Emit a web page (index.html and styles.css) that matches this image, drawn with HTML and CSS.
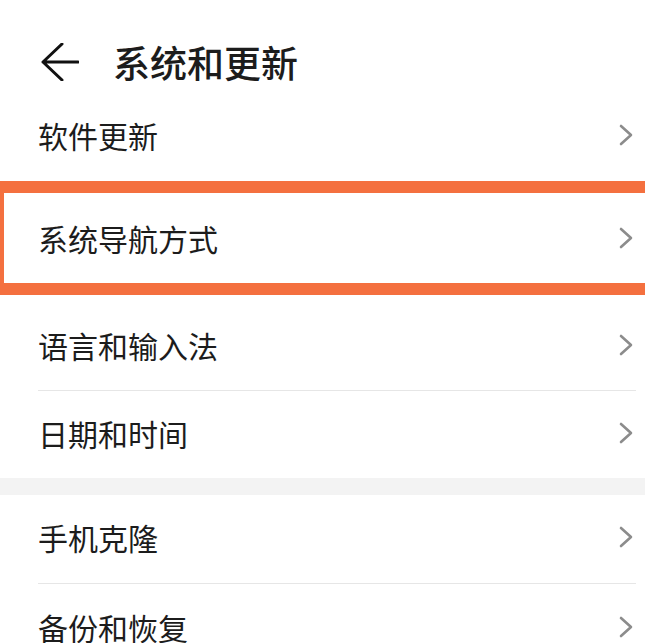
FILE: index.html
```html
<!DOCTYPE html>
<html lang="zh-CN">
<head>
    <meta charset="UTF-8">
    <meta name="viewport" content="width=device-width, initial-scale=1.0">
    <title>系统和更新</title>
    <link rel="stylesheet" href="styles.css">
</head>
<body>
    <div class="page">
        <div class="header">
            <svg class="back" width="38" height="38" viewBox="0 0 38 38">
                <path d="M21 1 L2 19 L21 37 M2 19 L37 19" fill="none" stroke="#111" stroke-width="3" stroke-linecap="round" stroke-linejoin="round"/>
            </svg>
            <h1>系统和更新</h1>
        </div>

        <div class="group">
            <div class="item">
                <span>软件更新</span>
                <svg class="chevron" width="14" height="22" viewBox="0 0 14 22"><path d="M2 2 L12 11 L2 20" fill="none" stroke="#8c8c8c" stroke-width="2.6" stroke-linecap="round" stroke-linejoin="round"/></svg>
            </div>
            <div class="item marked">
                <span>系统导航方式</span>
                <svg class="chevron" width="14" height="22" viewBox="0 0 14 22"><path d="M2 2 L12 11 L2 20" fill="none" stroke="#8c8c8c" stroke-width="2.6" stroke-linecap="round" stroke-linejoin="round"/></svg>
            </div>
            <div class="item lang line">
                <span>语言和输入法</span>
                <svg class="chevron" width="14" height="22" viewBox="0 0 14 22"><path d="M2 2 L12 11 L2 20" fill="none" stroke="#8c8c8c" stroke-width="2.6" stroke-linecap="round" stroke-linejoin="round"/></svg>
            </div>
            <div class="item date">
                <span>日期和时间</span>
                <svg class="chevron" width="14" height="22" viewBox="0 0 14 22"><path d="M2 2 L12 11 L2 20" fill="none" stroke="#8c8c8c" stroke-width="2.6" stroke-linecap="round" stroke-linejoin="round"/></svg>
            </div>
        </div>

        <div class="gap"></div>

        <div class="group">
            <div class="item line">
                <span>手机克隆</span>
                <svg class="chevron" width="14" height="22" viewBox="0 0 14 22"><path d="M2 2 L12 11 L2 20" fill="none" stroke="#8c8c8c" stroke-width="2.6" stroke-linecap="round" stroke-linejoin="round"/></svg>
            </div>
            <div class="item">
                <span>备份和恢复</span>
                <svg class="chevron" width="14" height="22" viewBox="0 0 14 22"><path d="M2 2 L12 11 L2 20" fill="none" stroke="#8c8c8c" stroke-width="2.6" stroke-linecap="round" stroke-linejoin="round"/></svg>
            </div>
        </div>
    </div>
</body>
</html>
```

FILE: styles.css
```css
body {
    margin: 0;
    background-color: #fff;
    font-family: "Noto Sans CJK SC", "Noto Sans", sans-serif;
    color: #1c1c1c;
    overflow: hidden;
}

.page {
    width: 645px;
    height: 643px;
    overflow: hidden;
}

.header {
    display: flex;
    align-items: center;
    height: 60px;
    padding: 32px 0 0 41px;
}

.back {
    flex-shrink: 0;
}

.header h1 {
    margin: 0 0 0 34px;
    font-size: 37px;
    font-weight: 500;
    line-height: 1;
}

.group {
    padding: 0 9px 0 38px;
}

.item {
    display: flex;
    align-items: center;
    justify-content: space-between;
    height: 89px;
    font-size: 30px;
    line-height: 1;
    padding-bottom: 4px;
    box-sizing: border-box;
}

.chevron {
    flex-shrink: 0;
    margin-right: 3px;
}

/* orange highlight frame, runs off the right edge */
.item.marked {
    box-sizing: content-box;
    height: 90px;
    padding: 0 28px 0 34px;
    margin: 0 -40px 0 -46px;
    border: 12px solid #f4703f;
}

.item.line {
    border-bottom: 1px solid #e6e6e6;
}

.item.lang {
    height: 96px;
    padding-top: 8px;
}

.item.date {
    height: 87px;
}

.gap {
    height: 17px;
    background-color: #f3f3f3;
}
```
